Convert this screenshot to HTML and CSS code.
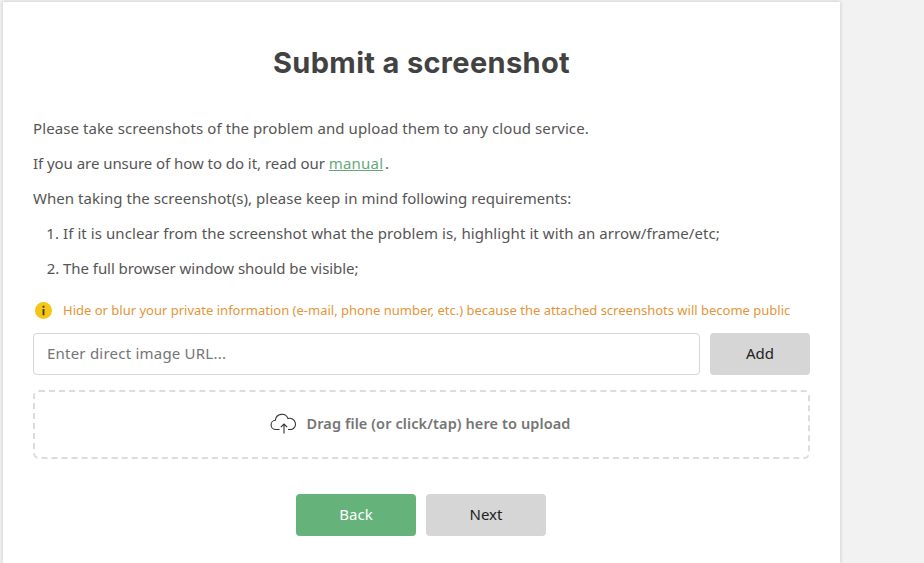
FILE: index.html
```html
<!DOCTYPE html>
<html lang="en">
<head>
    <meta charset="UTF-8">
    <meta name="viewport" content="width=device-width, initial-scale=1.0">
    <title>Submit a screenshot</title>
    <link rel="stylesheet" href="styles.css">
</head>
<body>
    <main class="card">
        <h1 class="title">Submit a screenshot</h1>
        <p class="line">Please take screenshots of the problem and upload them to any cloud service.</p>
        <p class="line line-tight">If you are unsure of how to do it, read our <a class="link" href="#">manual</a> <span class="dot">.</span></p>
        <p class="line line-snug">When taking the screenshot(s), please keep in mind following requirements:</p>
        <ol class="reqs">
            <li>If it is unclear from the screenshot what the problem is, highlight it with an arrow/frame/etc;</li>
            <li class="line-tight">The full browser window should be visible;</li>
        </ol>
        <div class="notice">
            <svg class="notice-icon" width="17" height="17" viewBox="0 0 18 18">
                <circle cx="9" cy="9" r="9" fill="#f5c518"/>
                <rect x="8" y="7.5" width="2" height="6.5" fill="#4a3d10"/>
                <rect x="8" y="4" width="2" height="2" fill="#4a3d10"/>
            </svg>
            <span>Hide or blur your private information (e-mail, phone number, etc.) because the attached screenshots will become public</span>
        </div>
        <div class="url-row">
            <input class="url-input" type="text" placeholder="Enter direct image URL...">
            <button class="btn btn-add" type="button">Add</button>
        </div>
        <div class="dropzone">
            <svg class="cloud" width="28" height="22" viewBox="0 0 28 22" fill="none" stroke="#333" stroke-width="1.1">
                <path d="M9.5 16.5H6a4.6 4.6 0 0 1-.6-9.2A6.5 6.5 0 0 1 18 5.6a5.5 5.5 0 0 1 3.5 10.9h-3.5"/>
                <path d="M14 20.5V11M10.8 14.2 14 11l3.2 3.2"/>
            </svg>
            <span>Drag file (or click/tap) here to upload</span>
        </div>
        <div class="actions">
            <button class="btn btn-back" type="button">Back</button>
            <button class="btn btn-next" type="button">Next</button>
        </div>
    </main>
</body>
</html>
```
FILE: styles.css
```css
html, body {
    height: 100%;
}

body {
    margin: 0;
    padding: 2px 0 0 3px;
    box-sizing: border-box;
    background-color: #f2f2f2;
    font-family: "Noto Sans", sans-serif;
    font-size: 15px;
    color: #555;
    overflow: hidden;
}

.card {
    width: 837px;
    height: 100%;
    box-sizing: border-box;
    padding: 0 30px;
    background-color: #fff;
    box-shadow: 0 0 4px rgba(0, 0, 0, 0.2);
}

.title {
    margin: 0;
    padding-top: 42px;
    height: 92px;
    box-sizing: border-box;
    text-align: center;
    font-family: Inter, sans-serif;
    font-size: 29px;
    line-height: 38px;
    font-weight: 700;
    letter-spacing: 0.34px;
    color: #424242;
}

.line {
    margin: 0 0 15px;
    line-height: 20px;
    letter-spacing: 0.09px;
}

.title + .line {
    margin-top: 24px;
}

.line-snug {
    letter-spacing: 0.05px;
}

.line-tight {
    letter-spacing: -0.05px;
}

.link {
    color: #65a87a;
    letter-spacing: 0.2px;
}

.dot {
    margin-left: -2px;
}

.reqs {
    margin: 0;
    padding: 0 0 0 30px;
    letter-spacing: 0.08px;
}

.reqs li {
    line-height: 20px;
    margin-bottom: 15px;
}

.notice {
    display: flex;
    align-items: center;
    gap: 11px;
    margin-top: 23px;
    padding-left: 2px;
    font-size: 13px;
    line-height: 18px;
    color: #e2963a;
}

.notice-icon {
    flex: none;
}

.url-row {
    display: flex;
    gap: 10px;
    margin-top: 14px;
}

.url-input {
    flex: 1;
    min-width: 0;
    height: 42px;
    box-sizing: border-box;
    padding: 0 12px 3px 13px;
    border: 1px solid #d6d6d6;
    border-radius: 4px;
    font: inherit;
    letter-spacing: 0.22px;
    color: #555;
    outline: none;
}

.url-input::placeholder {
    color: #757575;
    opacity: 1;
}

.btn {
    height: 42px;
    padding: 0 0 2px;
    border: none;
    border-radius: 4px;
    font: inherit;
    cursor: pointer;
}

.btn-add {
    width: 100px;
    background-color: #d6d6d6;
    color: #222;
}

.dropzone {
    display: flex;
    align-items: center;
    justify-content: center;
    gap: 9px;
    height: 69px;
    box-sizing: border-box;
    margin-top: 15px;
    padding: 0 3px 3px 0;
    border: 2px dashed #dcdcdc;
    border-radius: 6px;
    font-size: 14.5px;
    font-weight: 600;
    letter-spacing: 0.1px;
    color: #757575;
}

.cloud {
    margin-top: 2px;
}

.actions {
    display: flex;
    justify-content: center;
    gap: 10px;
    margin-top: 35px;
    padding-right: 1px;
}

.btn-back,
.btn-next {
    width: 120px;
}

.btn-back {
    background-color: #65b27a;
    color: #fff;
}

.btn-next {
    background-color: #d6d6d6;
    color: #222;
}
```
